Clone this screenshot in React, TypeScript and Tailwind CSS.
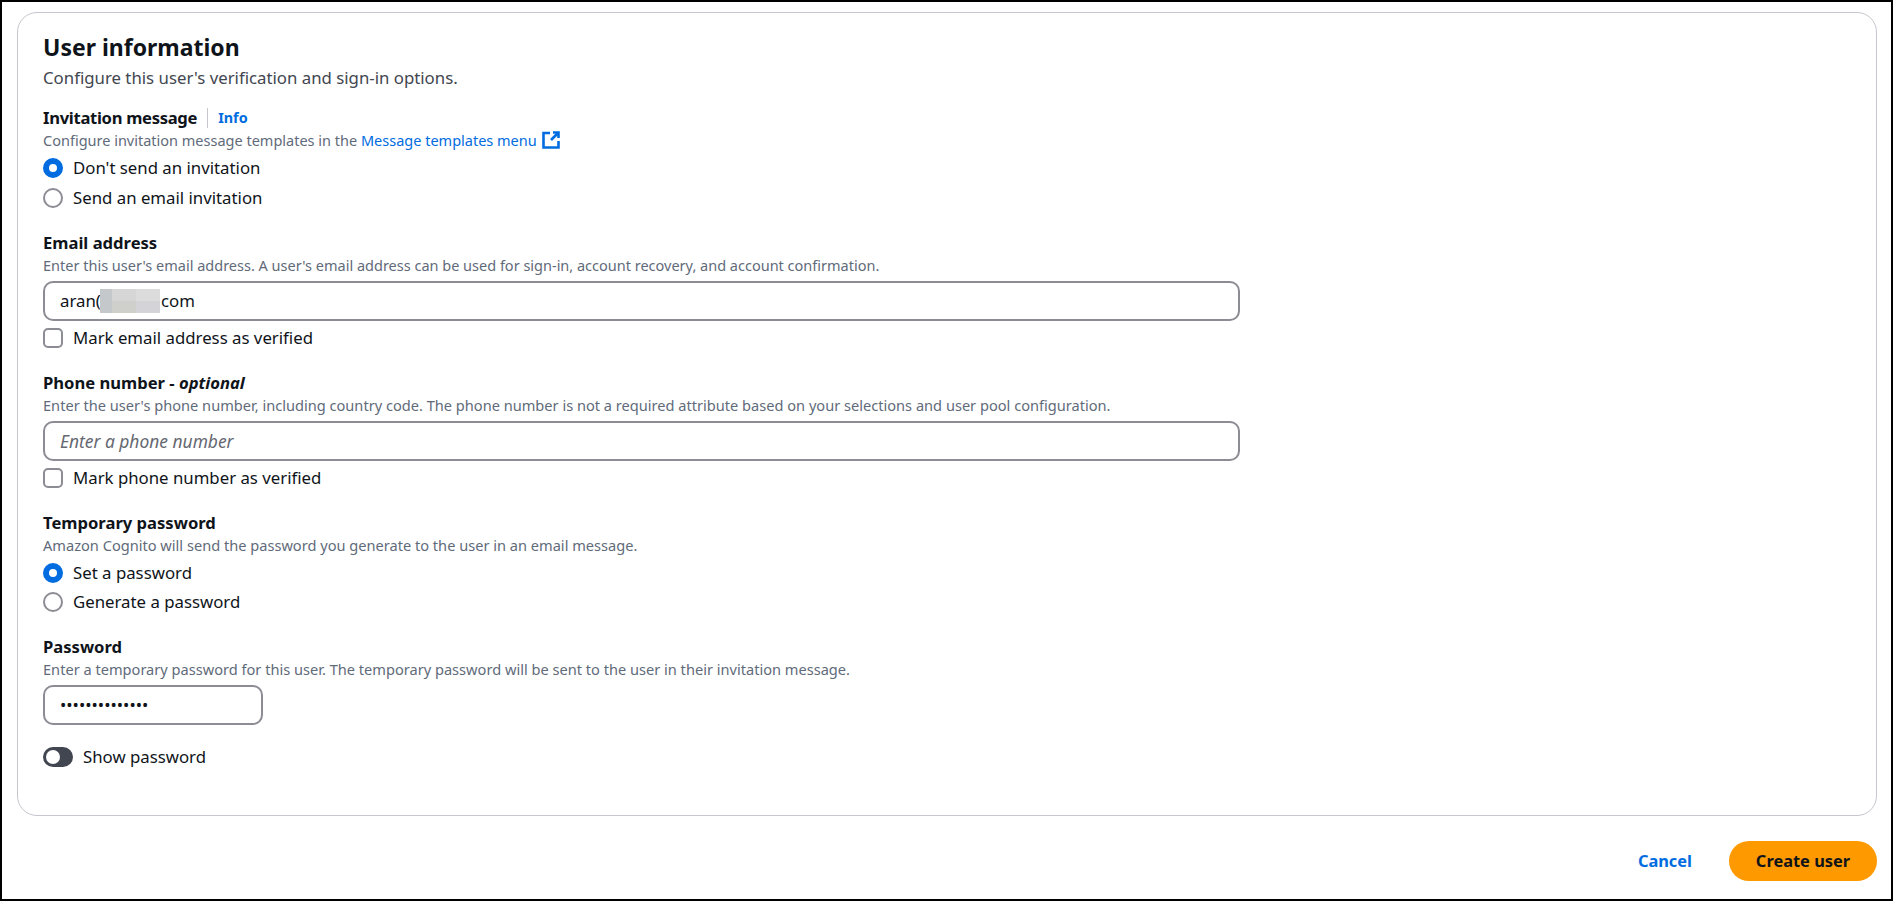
import React from 'react';

const Hint: React.FC<{ children: React.ReactNode; className?: string }> = ({ children, className }) => (
  <p className={`leading-[18px] text-[#5f6b7a] ${className ?? ''}`}>{children}</p>
);

const Label: React.FC<{ children: React.ReactNode; className?: string }> = ({ children, className }) => (
  <p className={`text-[16.6px] leading-[20px] font-bold text-[#0f141a] ${className ?? ''}`}>{children}</p>
);

const Radio: React.FC<{ checked?: boolean; label: string; className?: string }> = ({ checked, label, className }) => (
  <label className={`flex items-center gap-[10px] text-[16.8px] leading-[20px] text-[#0f141a] ${className ?? ''}`}>
    {checked ? (
      <span className="w-5 h-5 rounded-full border-[6px] border-[#006ce0] bg-white" />
    ) : (
      <span className="w-5 h-5 rounded-full border-2 border-[#8c8c94] bg-white" />
    )}
    {label}
  </label>
);

const Checkbox: React.FC<{ label: string; className?: string }> = ({ label, className }) => (
  <label className={`flex items-center gap-[10px] text-[16.8px] leading-[20px] text-[#0f141a] ${className ?? ''}`}>
    <span className="w-5 h-5 rounded-[5px] border-2 border-[#8c8c94] bg-white" />
    {label}
  </label>
);

const inputBox = 'h-10 rounded-[10px] border-2 border-[#8c8c94] bg-white flex items-center px-[15px] text-[16.8px] text-[#0f141a]';

export default function App() {
  return (
    <div className="w-[1895px] h-[906px] bg-white font-['Noto_Sans',sans-serif] overflow-hidden">
      <div className="h-[901px] w-[1893px] border-2 border-black pl-[15px] pr-[14px] pt-[10px]">
        <div className="h-[804px] rounded-[20px] border border-[#c6c6cd] pl-[25px] pt-[20px]">
          <h2 className="text-[23px] leading-[28px] font-bold text-[#0f141a]">User information</h2>
          <p className="mt-[7px] text-[16.8px] leading-[20px] text-[#424650]">Configure this user's verification and sign-in options.</p>

          <div className="mt-[20px] flex items-center h-5">
            <Label className="tracking-[-0.3px]">Invitation message</Label>
            <span className="mx-[10px] w-px h-5 bg-[#c6c6cd]" />
            <a className="text-[14.4px] font-bold text-[#006ce0]">Info</a>
          </div>
          <Hint className="mt-[3px] flex items-center text-[14.5px]">
            Configure invitation message templates in the&nbsp;<a className="text-[#006ce0]">Message templates menu</a>
            <svg className="ml-[5px]" width="18" height="18" viewBox="0 0 18 18" fill="none" stroke="#006ce0" strokeWidth="2.6">
              <path d="M8 2H1.5v14.5h15V10" />
              <path d="M11 1.5h5.5V7" />
              <path d="M16 2 9 9" />
            </svg>
          </Hint>
          <Radio checked label="Don't send an invitation" className="mt-[9px]" />
          <Radio label="Send an email invitation" className="mt-[10px]" />

          <div className="mt-[25px]"><Label>Email address</Label></div>
          <Hint className="mt-[3px] text-[14.5px]">Enter this user's email address. A user's email address can be used for sign-in, account recovery, and account confirmation.</Hint>
          <div className={`mt-[7px] w-[1197px] ${inputBox}`}>
            <span className="w-[40px] shrink-0 overflow-hidden whitespace-nowrap">aran(</span>
            <span className="flex flex-col w-[60px] h-6 shrink-0">
              <span className="flex h-3">
                <span className="w-[12px] bg-[#c4c8cb]" />
                <span className="w-[24px] bg-[#d6d6d6]" />
                <span className="w-[24px] bg-[#dcdcdc]" />
              </span>
              <span className="flex h-3">
                <span className="w-[12px] bg-[#c4c8cb]" />
                <span className="w-[24px] bg-[#cfcfcc]" />
                <span className="w-[24px] bg-[#d4d4d8]" />
              </span>
            </span>
            <span className="ml-px">com</span>
          </div>
          <Checkbox label="Mark email address as verified" className="mt-[7px]" />

          <div className="mt-[25px]"><Label>Phone number - <em className="italic">optional</em></Label></div>
          <Hint className="mt-[3px] text-[14.6px]">Enter the user's phone number, including country code. The phone number is not a required attribute based on your selections and user pool configuration.</Hint>
          <div className={`mt-[7px] w-[1197px] ${inputBox}`}>
            <span className="italic text-[17.4px] text-[#656871]">Enter a phone number</span>
          </div>
          <Checkbox label="Mark phone number as verified" className="mt-[7px]" />

          <div className="mt-[25px]"><Label>Temporary password</Label></div>
          <Hint className="mt-[3px] text-[14.6px]">Amazon Cognito will send the password you generate to the user in an email message.</Hint>
          <Radio checked label="Set a password" className="mt-[9px]" />
          <Radio label="Generate a password" className="mt-[9px]" />

          <div className="mt-[25px]"><Label>Password</Label></div>
          <Hint className="mt-[3px] text-[14.6px]">Enter a temporary password for this user. The temporary password will be sent to the user in their invitation message.</Hint>
          <div className={`mt-[7px] w-[220px] ${inputBox}`}>
            <span>••••••••••••••</span>
          </div>
          <label className="mt-[22px] flex items-center gap-[10px] text-[16.8px] leading-[20px] text-[#0f141a]">
            <span className="w-[30px] h-5 rounded-full bg-[#424650] flex items-center pl-[3px]">
              <span className="w-[14px] h-[14px] rounded-full bg-white" />
            </span>
            Show password
          </label>
        </div>
        <div className="mt-[25px] flex items-center justify-end">
          <a className="text-[16.4px] font-bold text-[#006ce0]">Cancel</a>
          <button className="ml-[37px] w-[148px] h-10 rounded-full bg-[#ff9900] text-[16.4px] font-bold text-[#0f141a]">Create user</button>
        </div>
      </div>
    </div>
  );
}
